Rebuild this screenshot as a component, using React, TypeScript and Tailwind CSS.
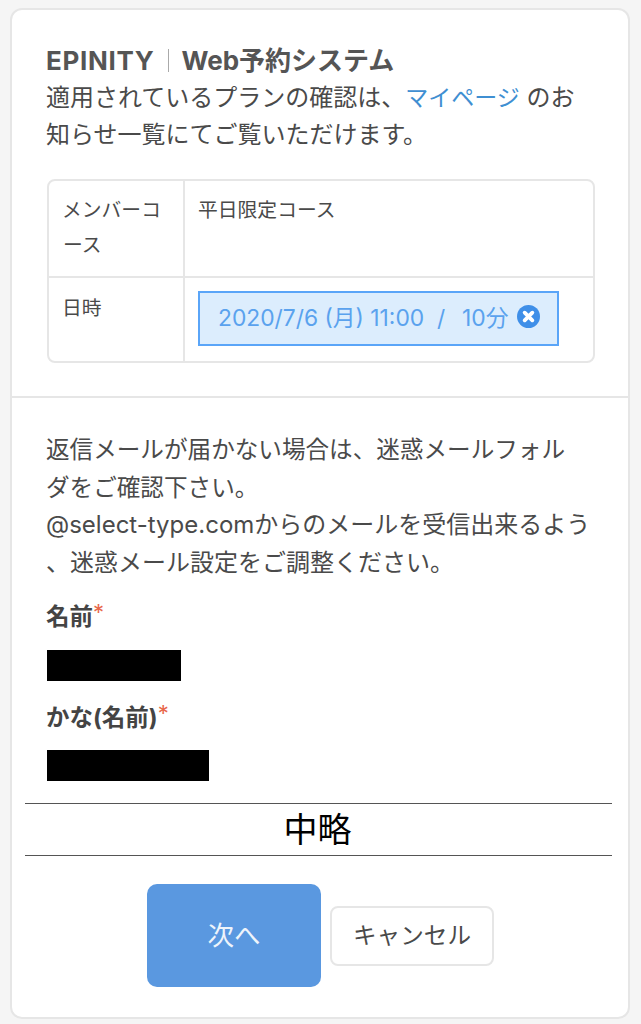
const font = "font-['Inter','Noto_Sans_CJK_JP','Noto_Sans',sans-serif]";

function RequiredLabel({ text, className }: { text: string; className: string }) {
  return (
    <div className={`h-[38px] text-[23.5px] leading-[38px] font-bold text-[#444] ${className}`}>
      {text}
      <span className="align-[5px] text-[22px] leading-none font-normal text-[#e8674a]">*</span>
    </div>
  );
}

function CloseCircle() {
  return (
    <svg viewBox="0 0 24 24" className="ml-[8px] h-[23px] w-[23px] -translate-y-[2px]">
      <circle cx="12" cy="12" r="12" fill="#3f8fe8" />
      <path d="M8 8 L16 16 M16 8 L8 16" stroke="#fff" strokeWidth="4" strokeLinecap="round" />
    </svg>
  );
}

export default function App() {
  return (
    <div className={`h-[1024px] w-[641px] overflow-hidden bg-[#f5f5f5] pt-[8px] pl-[10px] ${font}`}>
      <div className="h-[1011px] w-[620px] rounded-[12px] border-2 border-[#e6e6e6] bg-white">
        <div className="h-[388px] border-b-2 border-[#e6e6e6] pt-[32px] pl-[34px]">
          <div className="flex items-center text-[26px] leading-[37px] font-bold text-[#555]">
            <span className="tracking-[0.7px]">EPINITY</span>
            <span className="mx-[13px] h-[23px] w-px bg-[#aaa]" />
            Web予約システム
          </div>
          <p className="text-[24px] leading-[37px] text-[#4a4a4a]">
            適用されているプランの確認は、<span className="text-[23px] leading-none text-[#3f8fd2]">マイページ</span> のお
            <br />
            知らせ一覧にてご覧いただけます。
          </p>
          <div className="mt-[26px] ml-px w-[548px] overflow-hidden rounded-[8px] border-2 border-[#e6e6e6] text-[19.8px] text-[#4a4a4a]">
            <div className="flex h-[97px] border-b-2 border-[#e6e6e6]">
              <div className="w-[136px] border-r-2 border-[#e6e6e6] px-[14px] pt-[12px] leading-[35px] [text-indent:-1px]">
                メンバーコ
                <br />
                ース
              </div>
              <div className="flex-1 pt-[12px] pl-[13px] leading-[35px]">平日限定コース</div>
            </div>
            <div className="flex h-[83px]">
              <div className="w-[136px] border-r-2 border-[#e6e6e6] pt-[13px] pl-[13px] leading-[35px]">日時</div>
              <div className="flex-1 pt-[13px] pl-[13px]">
                <div className="flex h-[55px] w-[361px] items-center border-2 border-[#5aa5f8] bg-[#dcedfd] pl-[18px] text-[22.8px] whitespace-pre text-[#5aa2ee]">
                  2020/7/6 (月) 11:00 {' / '}
                  <span className="ml-[4px]"> 10分</span>
                  <CloseCircle />
                </div>
              </div>
            </div>
          </div>
        </div>

        <div className="pt-[33px] pl-[34px]">
          <p className="text-[23.6px] leading-[37.6px] text-[#4a4a4a]">
            返信メールが届かない場合は、迷惑メールフォル
            <br />
            ダをご確認下さい。
            <br />
            <span className="text-[24px]">@select-type.comからのメールを受信出来るよう</span>
            <br />
            <span className="text-[24px]">、迷惑メール設定をご調整ください。</span>
          </p>
          <RequiredLabel text="名前" className="mt-[17px]" />
          <div className="mt-[14px] ml-px h-[31px] w-[134px] bg-black" />
          <RequiredLabel text="かな(名前)" className="mt-[18px]" />
          <div className="mt-[13px] ml-px h-[31px] w-[162px] bg-black" />
        </div>

        <div className="mt-[22px] ml-[13px] flex h-[53px] w-[587px] items-center justify-center border-y border-[#555] pr-[2px] text-[34px] text-black">
          中略
        </div>

        <div className="mt-[28px] flex items-center pl-[135px]">
          <button className="h-[103px] w-[174px] rounded-[10px] bg-[#5a98e0] text-[26.5px] text-[#eef4fb]">次へ</button>
          <button className="ml-[9px] h-[60px] w-[164px] rounded-[8px] border-2 border-[#e6e6e6] bg-white text-[23.6px] text-[#4a4a4a]">
            キャンセル
          </button>
        </div>
      </div>
    </div>
  );
}
